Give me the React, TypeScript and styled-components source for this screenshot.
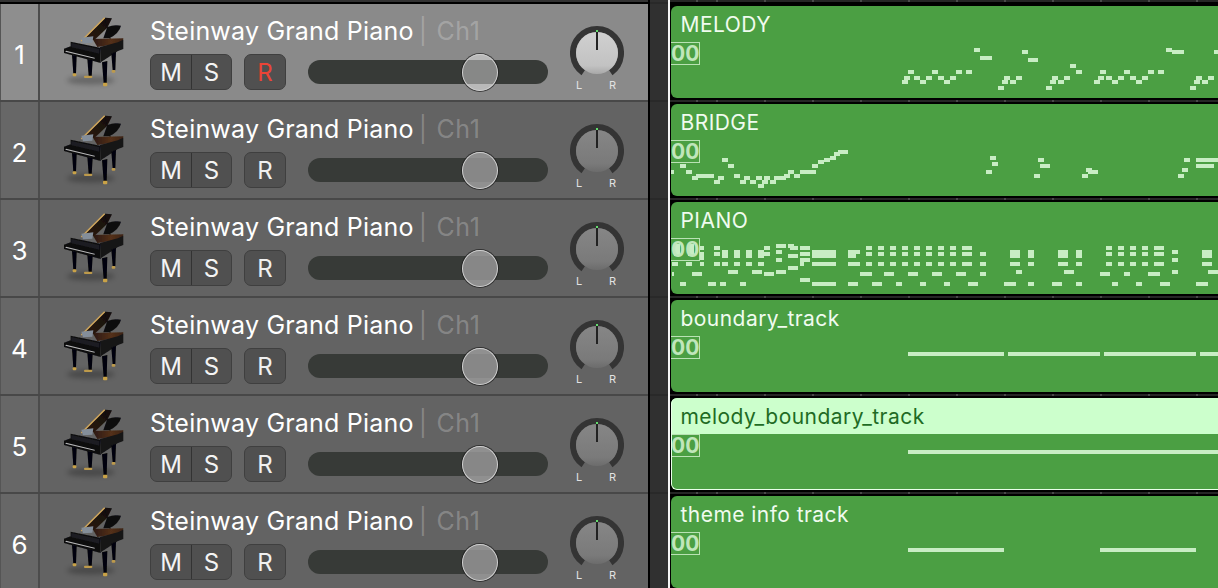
import React from "react";
import styled, { createGlobalStyle } from "styled-components";

type Note = number[];

const GlobalStyle = createGlobalStyle`
  html, body {
    margin: 0;
    padding: 0;
    background: #000;
    overflow: hidden;
  }
  * {
    box-sizing: border-box;
  }
`;

const Page = styled.div`
  display: flex;
  width: 1218px;
  height: 588px;
  overflow: hidden;
  background: #000;
  font-family: Inter, "Liberation Sans", sans-serif;
`;

const TrackList = styled.div`
  flex: 0 0 648px;
  padding-top: 4px;
  background: linear-gradient(#333 0 2px, #000 2px 4px);
`;

const Row = styled.div<{ $selected?: boolean }>`
  display: flex;
  height: 98px;
  border-bottom: 2px solid #484848;
  background: ${(p) => (p.$selected ? "#8a8a8a" : "#636363")};
`;

const NumCell = styled.div<{ $selected?: boolean }>`
  flex: 0 0 40px;
  display: flex;
  align-items: center;
  justify-content: center;
  padding-top: 4px;
  border-right: 2px solid #4c4c4c;
  border-left: 1px solid #555;
  color: #fff;
  font-size: 26px;
  background: ${(p) => (p.$selected ? "#8e8e8e" : "#676767")};
`;

const PianoIcon = styled.svg`
  flex: 0 0 90px;
  width: 90px;
  height: 90px;
  margin: 1px 10px 0 10px;
`;

const Info = styled.div`
  flex: 0 0 398px;
  padding-top: 12px;
`;

const Name = styled.div`
  height: 30px;
  margin-bottom: 8px;
  color: #fff;
  font-size: 25px;
  line-height: 30px;
  letter-spacing: 0.2px;
  white-space: nowrap;
`;

const Channel = styled.span`
  margin-left: -2px;
  color: rgba(255, 255, 255, 0.24);
  word-spacing: 1px;
  letter-spacing: 0.6px;
`;

const Controls = styled.div`
  display: flex;
  align-items: center;
  height: 36px;
`;

const ButtonGroup = styled.div`
  display: flex;
  height: 36px;
  border: 1px solid #3f3f3f;
  border-radius: 7px;
  background: #505050;
  overflow: hidden;
`;

const GroupButton = styled.div`
  flex: 0 0 40px;
  display: flex;
  align-items: center;
  justify-content: center;
  color: #f4f4f4;
  font-size: 24px;

  & + & {
    border-left: 1px solid #333;
  }
`;

const RecordButton = styled(ButtonGroup)<{ $armed?: boolean }>`
  width: 42px;
  margin: 0 22px 0 12px;
  align-items: center;
  justify-content: center;
  color: ${(p) => (p.$armed ? "#ec4436" : "#f0f0f0")};
  font-size: 24px;
`;

const SliderTrack = styled.div`
  position: relative;
  width: 240px;
  height: 24px;
  border-radius: 12px;
  background: #373a37;
`;

const SliderThumb = styled.div<{ $selected?: boolean }>`
  position: absolute;
  left: 154px;
  top: -6px;
  width: 36px;
  height: 37px;
  border-radius: 50%;
  border: 1px solid #d0d0d0;
  background: ${(p) =>
    p.$selected ? "rgba(255, 255, 255, 0.4)" : "rgba(155, 155, 155, 0.8)"};
  box-shadow: 0 0 0 1px rgba(30, 30, 30, 0.7);
`;

const KnobBlock = styled.div`
  flex: 0 0 54px;
  margin: 22px 0 0 22px;
`;

const KnobSvg = styled.svg`
  display: block;
  width: 54px;
  height: 54px;
`;

const KnobLabels = styled.div`
  display: flex;
  justify-content: space-between;
  margin-top: -1px;
  padding: 0 8px 0 6px;
  color: #e2e2e2;
  font-size: 11px;
  line-height: 12px;
`;

const Gutter = styled.div`
  flex: 0 0 23px;
  border-left: 2px solid #000;
  border-right: 1px solid #000;
  background:
    linear-gradient(90deg, transparent 0 18px, #f4f4f4 18px 20px),
    repeating-linear-gradient(#303030 0 96px, #292929 96px 98px) 0 4px;
`;

const Arrange = styled.div`
  flex: 1;
  min-width: 0;
  background: #000;
`;

const Lane = styled.div`
  height: 98px;

  &:first-child {
    height: 100px;
  }
`;

const TickStrip = styled.div`
  height: 2px;
  margin-left: -1px;
  background: repeating-linear-gradient(
    90deg,
    #4a4a4a 0 2px,
    #262626 2px 48px
  );
  background-position: 46px 0;
`;

const RegionBox = styled.div<{ $selected?: boolean; $first?: boolean }>`
  position: relative;
  height: 92px;
  margin-top: ${(p) => (p.$first ? "4px" : "2px")};
  border-radius: 6px 0 0 6px;
  background: #4b9f43;
  overflow: hidden;

  &::after {
    content: "";
    display: ${(p) => (p.$selected ? "block" : "none")};
    position: absolute;
    inset: 0;
    border-radius: 6px 0 0 6px;
    border-left: 1px solid #e8ffe8;
    border-bottom: 1.5px solid #e8ffe8;
  }
`;

const RegionTitle = styled.div<{ $selected?: boolean }>`
  height: 36px;
  padding-left: 9.5px;
  color: ${(p) => (p.$selected ? "#1f6b24" : "#f0fbef")};
  background: ${(p) => (p.$selected ? "#ccffcc" : "transparent")};
  font-size: 21px;
  line-height: 37px;
  letter-spacing: 0.45px;
  white-space: nowrap;
`;

const NotesSvg = styled.svg`
  position: absolute;
  left: 0;
  top: 0;
  width: 547px;
  height: 92px;
`;

const LoopMark = styled.div`
  position: absolute;
  left: 0;
  top: 36px;
  width: 29px;
  height: 23px;
  border: 1px solid #b9e2b4;
  border-left: none;
  color: #c0e6bb;
  font-size: 21px;
  font-weight: 700;
  line-height: 22px;
  letter-spacing: 0.2px;
  white-space: nowrap;
`;

// notes are written in 3x px, x from 660, y from the top of the region
const shift = (dx: number, dy: number, list: Note[]): Note[] =>
  list.map(([x, y, w, h]) => [x + dx, y + dy, w, h ?? 12]);

const melodyNotes = [
  ...shift(0, -18, [
    [726, 240, 18], [732, 228, 18], [744, 210, 18], [762, 228, 18], [780, 240, 18],
    [798, 228, 18], [816, 210, 18], [834, 228, 18],
  ]),
  ...shift(840, -18, [
    [12, 240, 18], [30, 228, 18], [48, 210, 18], [78, 210, 18], [102, 144, 18],
    [120, 168, 36], [174, 258, 18], [186, 240, 18], [192, 228, 18], [210, 240, 18],
    [228, 228, 18], [246, 150, 18], [264, 174, 30], [318, 258, 18], [330, 240, 18],
    [336, 228, 18], [354, 240, 18], [372, 228, 18], [390, 192, 18], [408, 210, 18],
    [462, 240, 18], [474, 228, 18], [480, 210, 18], [498, 228, 18], [516, 240, 18],
    [534, 228, 18], [552, 210, 18], [570, 228, 18], [588, 240, 18], [606, 228, 18],
    [624, 210, 18], [654, 210, 18], [678, 144, 18], [696, 150, 36], [750, 258, 18],
    [762, 240, 18], [768, 228, 18], [786, 240, 18], [804, 228, 18], [822, 150, 12],
  ]),
];

const bridgeNotes = [
  ...shift(0, -312, [
    [33, 510, 9], [60, 492, 18], [78, 510, 18], [96, 528, 18], [108, 522, 54],
    [162, 540, 18], [174, 528, 18], [186, 474, 18], [204, 492, 18], [222, 522, 18],
    [240, 540, 18], [252, 528, 18], [270, 540, 18], [288, 528, 18], [294, 552, 18],
    [306, 540, 18], [312, 528, 18], [330, 540, 18], [342, 528, 18], [360, 528, 18],
    [372, 522, 18], [384, 510, 18], [402, 522, 18], [420, 510, 18], [438, 510, 18],
    [450, 510, 18], [456, 492, 18], [474, 480, 18], [492, 474, 18], [510, 468, 18],
    [522, 456, 18], [534, 450, 30],
  ]),
  ...shift(840, -312, [
    [150, 468, 18], [156, 486, 18], [138, 510, 18], [294, 474, 18], [300, 492, 30],
    [282, 522, 18], [438, 504, 18], [444, 510, 30], [426, 522, 18], [732, 474, 18],
    [726, 504, 18], [714, 522, 18], [768, 474, 66], [768, 492, 54],
  ]),
];

const pianoNotes = [
  ...shift(0, -6, [
    [42, 132, 18, 36], [84, 132, 18, 36], [36, 186, 18], [78, 186, 18],
    [120, 138, 12], [120, 156, 12], [120, 168, 12], [120, 186, 12],
    [162, 138, 18], [162, 156, 18], [162, 186, 18], [186, 186, 18], [222, 186, 18],
    [258, 186, 18], [294, 186, 18], [186, 150, 18, 24], [222, 150, 18, 24],
    [258, 150, 18, 24], [294, 150, 18, 24], [312, 138, 18], [312, 156, 18],
    [348, 132, 30], [384, 132, 18], [390, 138, 24], [348, 150, 18], [384, 162, 30],
    [348, 174, 18], [384, 198, 30], [420, 138, 30], [420, 156, 30], [420, 174, 30],
    [420, 186, 12], [456, 150, 72, 24], [456, 186, 72], [564, 150, 36], [564, 162, 24],
    [564, 186, 36], [36, 216, 6], [60, 246, 18], [96, 216, 30], [144, 246, 24],
    [180, 246, 18], [240, 246, 18], [204, 210, 30], [276, 210, 30], [312, 216, 30],
    [348, 210, 30], [420, 234, 30], [456, 246, 72], [564, 246, 30], [600, 216, 36],
    [672, 216, 30], [744, 216, 30], [816, 216, 24], [636, 246, 30], [708, 246, 18],
    [780, 246, 18],
    ...[618, 654, 690, 726, 762, 798].flatMap((x) => [
      [x, 138, 18], [x, 156, 18], [x, 186, 18],
    ]),
    [834, 138, 18], [834, 156, 18], [834, 186, 18],
  ]),
  ...shift(840, -6, [
    [0, 138, 12], [0, 156, 12], [0, 186, 12], [30, 138, 18], [30, 156, 18], [30, 186, 18],
    [66, 138, 30], [66, 156, 30], [66, 186, 30], [120, 156, 18], [120, 186, 18],
    [210, 150, 30, 24], [264, 150, 18, 24], [354, 150, 30, 24], [408, 150, 18, 24],
    [786, 150, 30, 24], [210, 186, 30], [264, 186, 18], [354, 186, 30], [408, 186, 18],
    [786, 186, 30], [696, 150, 18], [696, 174, 18], [696, 210, 18],
    ...[498, 534, 570, 606].flatMap((x) => [
      [x, 138, 18], [x, 156, 18], [x, 186, 18],
    ]),
    [642, 138, 30], [642, 156, 30], [642, 186, 30],
    [0, 216, 6], [48, 216, 30], [120, 216, 18], [228, 210, 18], [372, 210, 30],
    [480, 216, 30], [552, 216, 18], [624, 216, 36], [804, 210, 30],
    [12, 246, 18], [84, 246, 30], [192, 246, 36], [264, 246, 18], [336, 246, 30],
    [408, 246, 18], [516, 246, 18], [588, 246, 18], [660, 246, 30], [768, 246, 36],
  ]),
];

const boundaryNotes = shift(0, 0, [
  [744, 156, 288], [1044, 156, 276], [1332, 156, 276], [1620, 156, 60],
]);
const melodyBoundaryNotes = shift(0, 0, [[744, 156, 930]]);
const themeNotes = shift(0, 0, [[744, 156, 288], [1320, 156, 288]]);

const regions = [
  { title: "MELODY", notes: melodyNotes },
  { title: "BRIDGE", notes: bridgeNotes },
  { title: "PIANO", notes: pianoNotes },
  { title: "boundary_track", notes: boundaryNotes },
  { title: "melody_boundary_track", notes: melodyBoundaryNotes, selected: true },
  { title: "theme info track", notes: themeNotes },
];

const Piano = () => (
  <PianoIcon viewBox="0 0 270 270">
    <defs>
      <filter id="soft" x="-20%" y="-20%" width="140%" height="140%">
        <feGaussianBlur stdDeviation="1.2" />
      </filter>
      <filter id="shade" x="-30%" y="-60%" width="160%" height="220%">
        <feGaussianBlur stdDeviation="8" />
      </filter>
      <linearGradient id="wood" x1="0" y1="0" x2="1" y2="0">
        <stop offset="0" stopColor="#2a1810" />
        <stop offset="0.6" stopColor="#54301a" />
        <stop offset="1" stopColor="#3c2416" />
      </linearGradient>
      <linearGradient id="lid" x1="0" y1="1" x2="1" y2="0">
        <stop offset="0" stopColor="#2e1c12" />
        <stop offset="1" stopColor="#100c0b" />
      </linearGradient>
    </defs>
    <ellipse cx="122" cy="226" rx="72" ry="13" fill="#000" opacity="0.25" filter="url(#shade)" />
    <g filter="url(#soft)">
      <path d="M100 104 L166 38 L186 40 L172 68 L134 104 Z" fill="url(#lid)" />
      <path d="M172 66 Q192 58 213 62 Q208 84 178 100 L160 100 Z" fill="#0a0a0c" />
      <path d="M165 44 L181 104" stroke="#101010" strokeWidth="3" fill="none" />
      <path d="M94 108 L164 38" stroke="#cfa55a" strokeWidth="4.5" fill="none" />
      <path d="M128 102 L220 100 L218 114 L142 126 Z" fill="url(#wood)" />
      <path d="M94 98 L130 94 L127 113 L99 115 Z" fill="#848e9a" />
      <path d="M150 126 L204 112 L220 104 L220 132 L204 138 L152 172 Z" fill="#141417" />
      <path d="M62 110 L150 128 L152 174 L42 144 L42 131 L62 124 Z" fill="#0b0b0d" />
      <path d="M64 114 L148 132 L148 146 L64 127 Z" fill="#1c1c20" />
      <path d="M48 137 L134 158 L134 161 L46 140 Z" fill="#b8b8b8" />
      <path d="M66 150 L80 153 L78 206 L70 206 Z" fill="#060608" />
      <path d="M112 162 L128 166 L125 213 L116 213 Z" fill="#060608" />
      <path d="M156 172 L172 168 L170 234 L161 234 Z" fill="#060608" />
      <path d="M184 146 L198 140 L196 196 L188 196 Z" fill="#060608" />
      <rect x="68" y="205" width="11" height="9" rx="3" fill="#c9a246" />
      <rect x="102" y="212" width="25" height="7" rx="3" fill="#bd9a4c" />
      <rect x="159" y="233" width="13" height="11" rx="3" fill="#c9a246" />
      <rect x="185" y="195" width="11" height="8" rx="3" fill="#bd9a4c" />
    </g>
  </PianoIcon>
);

const Knob = ({ selected, id }: { selected?: boolean; id: number }) => (
  <KnobSvg viewBox="0 0 54 54">
    <defs>
      <linearGradient id={`cap${id}`} x1="0" y1="0" x2="0" y2="1">
        <stop offset="0" stopColor={selected ? "#d0d0d0" : "#868686"} />
        <stop offset="0.8" stopColor={selected ? "#c2c2c2" : "#7a7a7a"} />
        <stop offset="1" stopColor={selected ? "#a8a8a8" : "#6c6c6c"} />
      </linearGradient>
    </defs>
    <path d="M13.2 46.7 A24 24 0 1 1 40.8 46.7" fill="none" stroke="#343434" strokeWidth="6" />
    <circle cx="27" cy="27" r="21" fill={`url(#cap${id})`} />
    <rect x="26" y="5" width="2" height="19" fill="#222" />
    <rect x="26" y="4" width="2" height="2" fill="#62dd6c" />
  </KnobSvg>
);

export default function App() {
  return (
    <Page>
      <GlobalStyle />
      <TrackList>
        {regions.map((_, i) => (
          <Row key={i} $selected={i === 0}>
            <NumCell $selected={i === 0}>{i + 1}</NumCell>
            <Piano />
            <Info>
              <Name>
                Steinway Grand Piano <Channel>| Ch1</Channel>
              </Name>
              <Controls>
                <ButtonGroup>
                  <GroupButton>M</GroupButton>
                  <GroupButton>S</GroupButton>
                </ButtonGroup>
                <RecordButton $armed={i === 0}>R</RecordButton>
                <SliderTrack>
                  <SliderThumb $selected={i === 0} />
                </SliderTrack>
              </Controls>
            </Info>
            <KnobBlock>
              <Knob selected={i === 0} id={i} />
              <KnobLabels>
                <span>L</span>
                <span>R</span>
              </KnobLabels>
            </KnobBlock>
          </Row>
        ))}
      </TrackList>
      <Gutter />
      <Arrange>
        {regions.map((r, i) => (
          <Lane key={r.title}>
            <TickStrip />
            <RegionBox $selected={r.selected} $first={i === 0}>
              <RegionTitle $selected={r.selected}>{r.title}</RegionTitle>
              <NotesSvg viewBox="33 0 1641 276" shapeRendering="crispEdges">
                {r.notes.map(([x, y, w, h], n) => (
                  <rect key={n} x={x} y={y} width={w} height={h} fill="#c8edc4" />
                ))}
              </NotesSvg>
              <LoopMark>00</LoopMark>
            </RegionBox>
          </Lane>
        ))}
      </Arrange>
    </Page>
  );
}
